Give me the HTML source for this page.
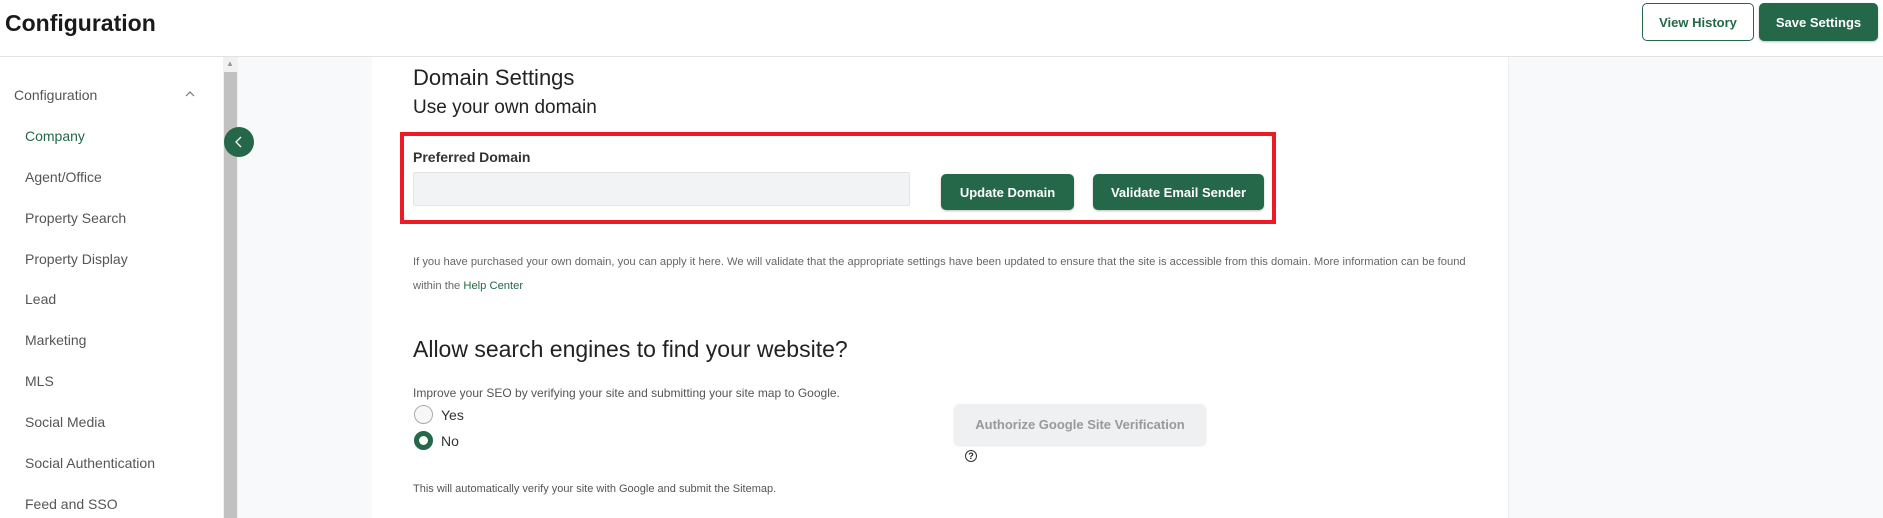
<!DOCTYPE html>
<html><head><meta charset="utf-8"><style>
*{box-sizing:border-box;margin:0;padding:0}
body{width:1883px;height:518px;overflow:hidden;font-family:"Liberation Sans",sans-serif;background:#fff;position:relative;color:#222}
.a{position:absolute;white-space:nowrap}
.btn{position:absolute;border-radius:5px;font-weight:bold;font-size:13px;display:flex;align-items:center;justify-content:center}
.g{background:#246749;color:#fff;box-shadow:0 1px 2px rgba(0,0,0,.25)}
.nav{position:absolute;left:25px;font-size:14px;color:#555}
.t12{font-size:11.2px;color:#666}
</style></head><body>
<div class="a" style="left:5px;top:10px;font-size:23px;font-weight:bold;color:#1a1a1a">Configuration</div>
<div class="btn" style="left:1642px;top:3px;width:112px;height:38px;border:1px solid #246749;color:#246749;background:#fff">View History</div>
<div class="btn g" style="left:1759px;top:3px;width:119px;height:38px">Save Settings</div>
<div class="a" style="left:0;top:56px;width:1883px;height:1px;background:#e2e2e2"></div>

<div class="a" style="left:223px;top:57px;width:15px;height:461px;background:#f1f1f1"></div>
<div class="a" style="left:224px;top:72px;width:13px;height:446px;background:#c1c1c1"></div>
<div class="a" style="left:226px;top:59px;font-size:8px;color:#999">▲</div>
<div class="a" style="left:238px;top:57px;width:134px;height:461px;background:#f8f9fa"></div>
<div class="a" style="left:1508px;top:57px;width:375px;height:461px;background:#f8f9fa;border-left:1px solid #eee"></div>

<div class="a" style="left:224px;top:127px;width:30px;height:30px;border-radius:50%;background:#246749"></div>
<svg class="a" style="left:231px;top:134px" width="16" height="16" viewBox="0 0 16 16"><path d="M10 3 L5 8 L10 13" stroke="#fff" stroke-width="1.3" fill="none"/></svg>

<div class="a" style="left:14px;top:87px;font-size:14px;color:#555">Configuration</div>
<svg class="a" style="left:184px;top:89px" width="12" height="10" viewBox="0 0 12 10"><path d="M2 7 L6 3 L10 7" stroke="#777" stroke-width="1.2" fill="none"/></svg>
<div class="nav" style="top:128px;color:#246749">Company</div>
<div class="nav" style="top:169px">Agent/Office</div>
<div class="nav" style="top:210px">Property Search</div>
<div class="nav" style="top:251px">Property Display</div>
<div class="nav" style="top:291px">Lead</div>
<div class="nav" style="top:332px">Marketing</div>
<div class="nav" style="top:373px">MLS</div>
<div class="nav" style="top:414px">Social Media</div>
<div class="nav" style="top:455px">Social Authentication</div>
<div class="nav" style="top:496px">Feed and SSO</div>

<div class="a" style="left:413px;top:65px;font-size:22px;color:#222">Domain Settings</div>
<div class="a" style="left:413px;top:97px;font-size:19px;color:#222">Use your own domain</div>
<div class="a" style="left:400px;top:132px;width:876px;height:92px;border:4px solid #ed1c24"></div>
<div class="a" style="left:413px;top:149px;font-size:14px;font-weight:bold;color:#333">Preferred Domain</div>
<div class="a" style="left:413px;top:172px;width:497px;height:34px;background:#f2f3f5;border:1px solid #e4e4e4;border-radius:2px"></div>
<div class="btn g" style="left:941px;top:174px;width:133px;height:36px">Update Domain</div>
<div class="btn g" style="left:1093px;top:174px;width:171px;height:36px">Validate Email Sender</div>

<div class="a t12" style="left:413px;top:256px">If you have purchased your own domain, you can apply it here. We will validate that the appropriate settings have been updated to ensure that the site is accessible from this domain. More information can be found</div>
<div class="a t12" style="left:413px;top:280px">within the <span style="color:#246749">Help Center</span></div>

<div class="a" style="left:413px;top:336px;font-size:23px;color:#222">Allow search engines to find your website?</div>
<div class="a" style="left:413px;top:386px;font-size:12px;color:#555">Improve your SEO by verifying your site and submitting your site map to Google.</div>
<div class="a" style="left:414px;top:405px;width:19px;height:19px;border-radius:50%;border:1px solid #aaa;background:#f7f7f7"></div>
<div class="a" style="left:441px;top:407px;font-size:14px;color:#333">Yes</div>
<div class="a" style="left:414px;top:431px;width:19px;height:19px;border-radius:50%;border:5px solid #246749;background:#fff"></div>
<div class="a" style="left:441px;top:433px;font-size:14px;color:#333">No</div>
<div class="btn" style="left:954px;top:404px;width:252px;height:41px;background:#eef0f2;color:#999;font-weight:bold;font-size:13px;box-shadow:0 1px 2px rgba(0,0,0,.1)">Authorize Google Site Verification</div>
<div class="a" style="left:965px;top:450px;width:12px;height:12px;border-radius:50%;border:1px solid #333;font-size:9px;line-height:10px;text-align:center;font-weight:bold">?</div>
<div class="a" style="left:413px;top:483px;font-size:11px;color:#555">This will automatically verify your site with Google and submit the Sitemap.</div>
</body></html>
